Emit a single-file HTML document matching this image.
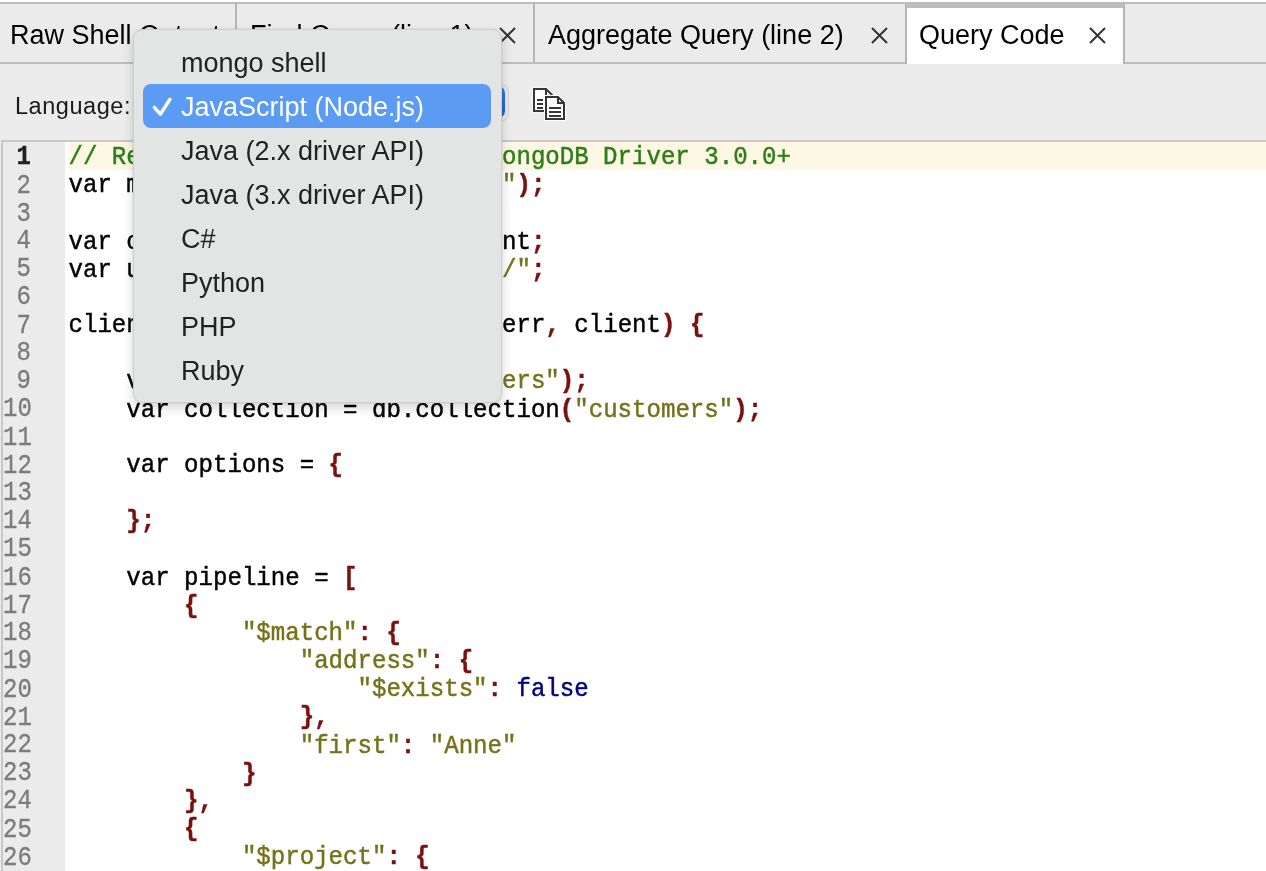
<!DOCTYPE html>
<html><head><meta charset="utf-8"><style>
html,body{margin:0;padding:0;width:1266px;height:871px;overflow:hidden;background:#ececec;font-family:"Liberation Sans",sans-serif;position:relative}
div,span,svg{box-sizing:border-box}
.a{position:absolute}
.tab{position:absolute;top:2px;height:62px;background:#ebebeb;border-top:2px solid #bdbdbd;border-bottom:2px solid #bdbdbd}
.sep{position:absolute;top:2px;width:2px;height:60px;background:#b5b5b5}
.tt{position:absolute;top:20px;font-size:27px;line-height:30px;color:#000;white-space:pre}
.x{position:absolute;top:26.5px;width:17px;height:17px}
.mi{position:absolute;left:181px;font-size:27px;line-height:30px;color:#222;white-space:pre}
#code{position:absolute;left:68.5px;top:143.8px;transform:scaleY(1.07);transform-origin:0 0;-webkit-text-stroke:0.45px currentColor;font-family:"Liberation Mono",monospace;font-size:24.08px;line-height:26.168px;color:#000;white-space:pre}
#nums{position:absolute;left:3px;top:144px;width:28px;transform:scaleY(1.13);transform-origin:0 0;text-align:right;font-family:"Liberation Mono",monospace;font-size:24px;line-height:24.7788px;color:#7c7c7c;-webkit-text-stroke:0.3px currentColor;white-space:pre}
.c{color:#2e7d18}
.s{color:#74731a}
.p{color:#7a1010;font-weight:bold}
.k{color:#000080}
.tt,.mi,#code,#nums,.lbl{will-change:opacity;opacity:0.999}</style></head><body>
<div class="a" style="left:0;top:0;width:1266px;height:2px;background:#fff"></div>
<!-- tabs -->
<div class="tab" style="left:0;width:1266px"></div>
<div class="sep" style="left:235px"></div>
<div class="sep" style="left:533px"></div>
<div class="tt" style="left:10px">Raw Shell Output</div>
<div class="tt" style="left:250px">Find Query (line 1)</div>
<svg class="x" style="left:499px" viewBox="0 0 17 17"><path d="M1 1L16 16M16 1L1 16" stroke="#333" stroke-width="2" fill="none"/></svg>
<div class="tt" style="left:548px">Aggregate Query (line 2)</div>
<svg class="x" style="left:871px" viewBox="0 0 17 17"><path d="M1 1L16 16M16 1L1 16" stroke="#333" stroke-width="2" fill="none"/></svg>
<div class="a" style="left:905px;top:2px;width:220px;height:62px;background:#fff;border-left:2px solid #b5b5b5;border-right:2px solid #b5b5b5;border-top:6px solid #bdbdbd"></div>
<div class="tt" style="left:919px">Query Code</div>
<svg class="x" style="left:1089px" viewBox="0 0 17 17"><path d="M1 1L16 16M16 1L1 16" stroke="#333" stroke-width="2" fill="none"/></svg>

<!-- toolbar -->
<div class="a lbl" style="left:15px;top:91px;font-size:23.5px;letter-spacing:0.55px;line-height:30px;color:#1a1a1a">Language:</div>
<div class="a" style="left:470px;top:83px;width:39px;height:39px;border-radius:9px;background:#e8e8e8;border:1px solid #d4d4d4"></div>
<div class="a" style="left:470px;top:86px;width:35px;height:32px;border-radius:7px;background:linear-gradient(#3478e0,#1f60d0)"></div>
<svg class="a" style="left:525px;top:80px" width="50" height="50" viewBox="0 0 50 50">
 <path d="M9 9H21L27 15V31H9Z" fill="#fff" stroke="#fff" stroke-width="3"/>
 <path d="M9 9H21L27 15V31H9Z" fill="#fff" stroke="#363636" stroke-width="2"/>
 <path d="M21 9V15" fill="none" stroke="#363636" stroke-width="2"/>
 <path d="M12 20H18M12 24H18M12 28H18" stroke="#363636" stroke-width="2"/>
 <path d="M21 17H33L39 23V39H21Z" fill="#fff" stroke="#fff" stroke-width="4"/>
 <path d="M21 17H33L39 23V39H21Z" fill="#fff" stroke="#363636" stroke-width="2"/>
 <path d="M33 17V23H39" fill="none" stroke="#363636" stroke-width="2"/>
 <path d="M24 28H36M24 32H36M24 36H36" stroke="#363636" stroke-width="2"/>
</svg>

<!-- editor -->
<div class="a" style="left:1px;top:140px;width:1265px;height:731px;background:#fff;border-top:2px solid #c8c8c8;border-left:2px solid #c8c8c8"></div>
<div class="a" style="left:3px;top:142px;width:62px;height:729px;background:#ebebeb"></div>
<div class="a" style="left:69px;top:142px;width:1197px;height:28px;background:#fdf8e3"></div>
<div id="nums"><span style="color:#222;font-weight:bold">1</span>
2
3
4
5
6
7
8
9
10
11
12
13
14
15
16
17
18
19
20
21
22
23
24
25
26</div>
<div id="code"><span class="c">// Requires official Node.js MongoDB Driver 3.0.0+</span>
var mongodb = require<span class="p">(</span><span class="s">"mongodb"</span><span class="p">);</span>

var client = mongodb.MongoClient<span class="p">;</span>
var url = <span class="s">"mongodb://localhost/"</span><span class="p">;</span>

client.connect<span class="p">(</span>url<span class="p">,</span> function <span class="p">(</span>err<span class="p">,</span> client<span class="p">)</span> <span class="p">{</span>

    var db = client.db<span class="p">(</span><span class="s">"customers"</span><span class="p">);</span>
    var collection = db.collection<span class="p">(</span><span class="s">"customers"</span><span class="p">);</span>

    var options = <span class="p">{</span>

    <span class="p">};</span>

    var pipeline = <span class="p">[</span>
        <span class="p">{</span>
            <span class="s">"$match"</span><span class="p">:</span> <span class="p">{</span>
                <span class="s">"address"</span><span class="p">:</span> <span class="p">{</span>
                    <span class="s">"$exists"</span><span class="p">:</span> <span class="k">false</span>
                <span class="p">},</span>
                <span class="s">"first"</span><span class="p">:</span> <span class="s">"Anne"</span>
            <span class="p">}</span>
        <span class="p">},</span>
        <span class="p">{</span>
            <span class="s">"$project"</span><span class="p">:</span> <span class="p">{</span></div>

<!-- popup -->
<div class="a" style="left:133px;top:29px;width:369px;height:374px;border-radius:10px;background:#e3e5e5;border:1px solid #cdcfcf;box-shadow:0 5px 12px rgba(0,0,0,0.16),0 0 2px rgba(0,0,0,0.12)"></div>
<div class="a" style="left:143px;top:84px;width:348px;height:44px;border-radius:8px;background:#5b9bf4"></div>
<svg class="a" style="left:150px;top:95px" width="24" height="24" viewBox="0 0 24 24"><path d="M4.3 12.4L10.3 19.2L20 4.3" fill="none" stroke="#fff" stroke-width="3.4" stroke-linecap="round" stroke-linejoin="round"/></svg>
<div class="mi" style="top:48px">mongo shell</div>
<div class="mi" style="top:92px;color:#fff">JavaScript (Node.js)</div>
<div class="mi" style="top:136px">Java (2.x driver API)</div>
<div class="mi" style="top:180px">Java (3.x driver API)</div>
<div class="mi" style="top:224px">C#</div>
<div class="mi" style="top:268px">Python</div>
<div class="mi" style="top:312px">PHP</div>
<div class="mi" style="top:356px">Ruby</div>
</body></html>
